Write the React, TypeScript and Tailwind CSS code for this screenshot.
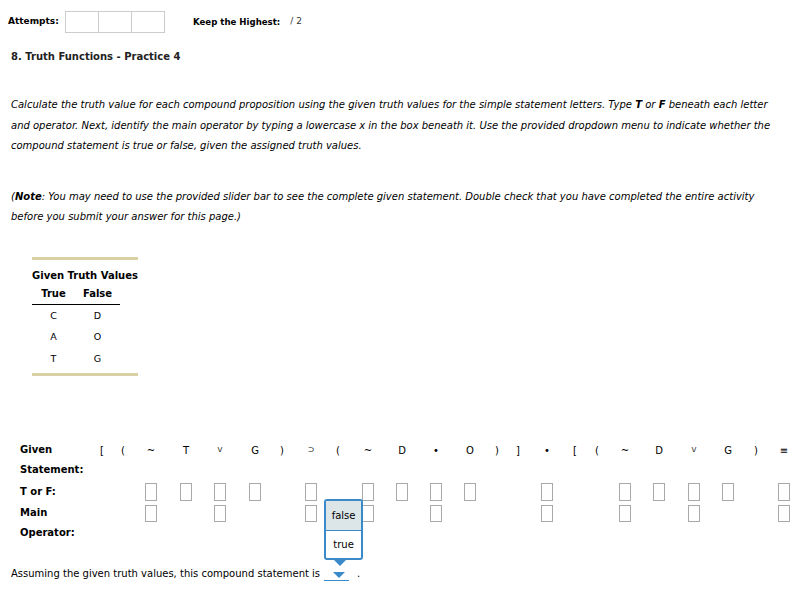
import React from "react";

type Col = { s: string; t?: boolean; m?: boolean; cls?: string };

const cols: Col[] = [
  { s: "[" },
  { s: "(" },
  { s: "~", t: true, m: true },
  { s: "T", t: true },
  { s: "v", t: true, m: true, cls: "text-[9px] text-[#444]" },
  { s: "G", t: true },
  { s: ")" },
  { s: "⊃", t: true, m: true, cls: "text-[8px]" },
  { s: "(" },
  { s: "~", t: true, m: true },
  { s: "D", t: true },
  { s: "•", t: true, m: true },
  { s: "O", t: true },
  { s: ")" },
  { s: "]" },
  { s: "•", t: true, m: true },
  { s: "[" },
  { s: "(" },
  { s: "~", t: true, m: true },
  { s: "D", t: true },
  { s: "v", t: true, m: true, cls: "text-[9px] text-[#444]" },
  { s: "G", t: true },
  { s: ")" },
  { s: "≡", t: true, m: true },
];

function Box({ top = false }: { top?: boolean }) {
  return (
    <div
      className={`w-[12px] border border-[#a9a9a9] bg-white ${
        top ? "h-[18px]" : "h-[17px] mt-[2px]"
      }`}
    />
  );
}

export default function App() {
  return (
    <div className="w-[801px] h-[593px] overflow-hidden bg-white text-black font-['DejaVu_Sans',Verdana,sans-serif] text-[10px]">
      {/* header */}
      <div className="flex items-center pl-[8px] pt-[11px] h-[33px]">
        <span className="font-bold text-[9px] w-[57px]">Attempts:</span>
        <div className="flex">
          <div className="w-[34px] h-[22px] border border-[#ccc]" />
          <div className="w-[34px] h-[22px] border border-[#ccc] -ml-px" />
          <div className="w-[34px] h-[22px] border border-[#ccc] -ml-px" />
        </div>
        <span className="ml-[28px] font-bold text-[8.6px]">Keep the Highest:</span>
        <span className="ml-[10px] text-[9px] text-[#333]">/ 2</span>
      </div>

      <div className="pl-[11px] mt-[16px] font-bold text-[10px] text-[#222] leading-[16px]">
        8. Truth Functions - Practice 4
      </div>

      {/* instructions */}
      <div className="pl-[11px] pr-[14px] mt-[30px] italic text-[10px] leading-[20.5px]">
        <p>
          Calculate the truth value for each compound proposition using the given truth values for the
          simple statement letters. Type <b>T</b> or <b>F</b> beneath each letter and operator. Next,
          identify the main operator by typing a lowercase x in the box beneath it. Use the provided
          dropdown menu to indicate whether the compound statement is true or false, given the
          assigned truth values.
        </p>
        <p className="mt-[30px]">
          (<b>Note</b>: You may need to use the provided slider bar to see the complete given
          statement. Double check that you have completed the entire activity before you submit your
          answer for this page.)
        </p>
      </div>

      {/* given truth values */}
      <div className="ml-[32px] mt-[29px] w-[106px]">
        <div className="h-[3px] bg-[#d9d0a3]" />
        <div className="mt-[9px] font-bold text-[10px] leading-[14px] whitespace-nowrap">
          Given Truth Values
        </div>
        <div className="w-[88px] mt-[4px] text-[10px]">
          <div className="grid grid-cols-[43px_45px] border-b border-black font-bold leading-[14px] pb-[3px]">
            <span className="text-center">True</span>
            <span className="text-center">False</span>
          </div>
          <div className="grid grid-cols-[43px_45px] text-[9.5px] leading-[21.5px]">
            <span className="text-center">C</span>
            <span className="text-center">D</span>
            <span className="text-center">A</span>
            <span className="text-center">O</span>
            <span className="text-center">T</span>
            <span className="text-center">G</span>
          </div>
        </div>
        <div className="mt-[4px] h-[3px] bg-[#d9d0a3]" />
      </div>

      {/* statement grid */}
      <div className="mt-[64px] ml-[20px] grid grid-cols-[71px_22px_20px_36px_34px_34px_36px_18px_40px_14px_46px_22px_46px_22px_32px_10px_48px_8px_36px_20px_48px_22px_46px_10px_46px] grid-rows-[40px_23px_40px] text-[10px]">
        <div className="font-bold text-[10px] leading-[20px]">
          Given
          <br />
          Statement:
        </div>
        {cols.map((c, i) => (
          <div key={"s" + i} className={`flex justify-center h-[20px] items-center ${c.cls ?? ""}`}>
            {c.s}
          </div>
        ))}

        <div className="font-bold text-[10px] leading-[23px]">T or F:</div>
        {cols.map((c, i) => (
          <div key={"t" + i} className="flex justify-center items-center">
            {c.t && <Box top />}
          </div>
        ))}

        <div className="font-bold text-[10px] leading-[20px]">
          Main
          <br />
          Operator:
        </div>
        {cols.map((c, i) => (
          <div key={"m" + i} className="flex justify-center items-start">
            {c.m && <Box />}
          </div>
        ))}
      </div>

      {/* answer sentence */}
      <div className="pl-[11px] mt-[24px] text-[10px] leading-[14px] flex items-end">
        <span>Assuming the given truth values, this compound statement is</span>
        <span className="relative ml-[4px] w-[25px] h-[14px] border-b border-[#3a8ac9] inline-block">
          <span className="absolute left-[9px] top-[5px] w-0 h-0 border-l-[6px] border-r-[6px] border-t-[6px] border-l-transparent border-r-transparent border-t-[#3a8ac9]" />
          <div className="absolute left-0 bottom-[20px] w-[39px] rounded-[3px] border-[2px] border-[#3a8ac9] bg-white">
            <div className="h-[30px] bg-[#dce5e7] border-b border-[#3a8ac9] flex items-center justify-center text-[10px]">
              false
            </div>
            <div className="h-[27px] flex items-center justify-center text-[10px]">true</div>
            <span className="absolute left-[7px] -bottom-[8px] w-0 h-0 border-l-[7px] border-r-[7px] border-t-[7px] border-l-transparent border-r-transparent border-t-[#3a8ac9]" />
          </div>
        </span>
        <span className="ml-[8px]">.</span>
      </div>
    </div>
  );
}
